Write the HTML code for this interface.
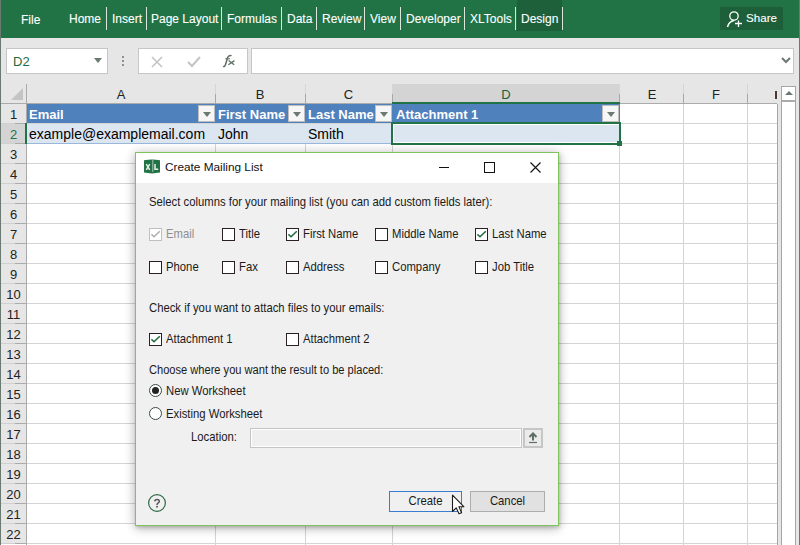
<!DOCTYPE html>
<html><head><meta charset="utf-8">
<style>
*{margin:0;padding:0;box-sizing:border-box}
html,body{width:800px;height:545px;overflow:hidden;background:#fff;font-family:"Liberation Sans",sans-serif}
.a{position:absolute}
#lb{left:0;top:0;width:1px;height:545px;background:#6b7a70;z-index:50}
#rb{left:799px;top:0;width:1px;height:545px;background:#6b7a70;z-index:50}
/* ribbon */
#rib{left:0;top:0;width:800px;height:38px;background:#217346}
.tab{top:12px;color:#fff;font-size:12px;-webkit-text-stroke:0.1px #fff;white-space:nowrap;line-height:14px}
.sep{top:7px;width:1px;height:23px;background:#d8e6dd}
/* formula */
#fb{left:0;top:38px;width:800px;height:46px;background:#e6e6e6}
.box{background:#fff;border:1px solid #c6c6c6}
/* grid */
#hdr{left:0;top:84px;width:778px;height:20px;background:#e6e6e6}
.ch{top:84px;height:20px;text-align:center;font-size:13px;line-height:22px;color:#222}
.vl{width:1px;background:#d4d4d4}
.hl{height:1px;background:#d4d4d4}
.rh{left:1px;width:25px;height:19px;text-align:center;font-size:13px;line-height:21px;color:#222;background:#e6e6e6}
.cell{font-size:14px;white-space:nowrap}
.dd{width:17px;height:17px;background:#f6f6f6;border:1px solid #bdbdbd}
.dd:after{content:"";position:absolute;left:4px;top:6px;border-left:4px solid transparent;border-right:4px solid transparent;border-top:5px solid #6b7a70}
/* dialog */
#dlg{left:135px;top:152px;width:424px;height:374px;border:1px solid #80c35a;background:#f0f0f0;box-shadow:1px 2px 3px rgba(0,0,0,.14),0 0 11px rgba(0,0,0,.15),0 3px 10px rgba(0,0,0,.18);z-index:10}
#ttl{left:0;top:0;width:422px;height:30px;background:#fff}
.t{font-size:11.3px;color:#1a1a1a;white-space:nowrap;line-height:13px;transform:scaleY(1.1);transform-origin:0 78%}
.cb{width:13px;height:13px;border:1px solid #2a2022;background:#fff}
.ck{position:absolute;left:1px;top:1px}
.rd{width:13px;height:13px;border:1px solid #3d4b42;border-radius:50%;background:#fff}
.btn{height:21px;border:1px solid #adadad;background:#e1e1e1;font-size:11.3px;text-align:center;line-height:19px;color:#1a1a1a}
.btn span{display:inline-block;transform:scaleY(1.1)}
</style></head><body>
<div id="lb" class="a"></div>
<div id="rib" class="a">
  <div class="a tab" style="left:21px;top:13px">File</div>
  <div class="a tab" style="left:69px">Home</div>
  <div class="a sep" style="left:106px"></div>
  <div class="a tab" style="left:112px">Insert</div>
  <div class="a sep" style="left:146px"></div>
  <div class="a tab" style="left:151px">Page Layout</div>
  <div class="a sep" style="left:221px"></div>
  <div class="a tab" style="left:227px">Formulas</div>
  <div class="a sep" style="left:281px"></div>
  <div class="a tab" style="left:287px">Data</div>
  <div class="a sep" style="left:316px"></div>
  <div class="a tab" style="left:322px">Review</div>
  <div class="a sep" style="left:364px"></div>
  <div class="a tab" style="left:370px">View</div>
  <div class="a sep" style="left:400px"></div>
  <div class="a tab" style="left:406px">Developer</div>
  <div class="a sep" style="left:464px"></div>
  <div class="a tab" style="left:470px">XLTools</div>
  <div class="a sep" style="left:515px"></div>
  <div class="a" style="left:517px;top:0;width:45px;height:31px;background:#1d6039"></div>
  <div class="a tab" style="left:521px">Design</div>
  <div class="a sep" style="left:562px"></div>
  <div class="a" style="left:720px;top:7px;width:63px;height:23px;background:#1d5f39"></div>
  <svg class="a" style="left:726px;top:10px" width="18" height="19" viewBox="0 0 18 19"><circle cx="8" cy="6" r="4.2" fill="none" stroke="#fff" stroke-width="1.3"/><path d="M1.5 17 Q3 11.5 8 10.6" fill="none" stroke="#fff" stroke-width="1.5"/><path d="M12.5 10.5v6.5M9 13.5h7" stroke="#fff" stroke-width="1.3"/></svg>
  <div class="a tab" style="left:746px;font-size:11.6px;top:11px">Share</div>
</div>
<div id="rb" class="a"></div>
<div id="fb" class="a">
  <div class="a box" style="left:6px;top:10px;width:102px;height:26px"></div>
  <div class="a" style="left:13px;top:16px;font-size:13px;color:#1f6a3c">D2</div>
  <div class="a" style="left:94px;top:20px;border-left:4px solid transparent;border-right:4px solid transparent;border-top:5px solid #6b7a70"></div>
  <div class="a" style="left:122px;top:18px;width:2px;height:2px;background:#8f8f8f"></div>
  <div class="a" style="left:122px;top:22px;width:2px;height:2px;background:#8f8f8f"></div>
  <div class="a" style="left:122px;top:26px;width:2px;height:2px;background:#8f8f8f"></div>
  <div class="a box" style="left:138px;top:10px;width:110px;height:26px"></div>
  <svg class="a" style="left:151px;top:18px" width="12" height="12"><path d="M1 1L11 11M11 1L1 11" stroke="#c4c4c4" stroke-width="1.6"/></svg>
  <svg class="a" style="left:187px;top:18px" width="14" height="12"><path d="M1 6L5 10L13 1" fill="none" stroke="#c4c4c4" stroke-width="2"/></svg>
  <svg class="a" style="left:221px;top:15px" width="16" height="16"><path d="M2 13.4 Q3.8 14.2 4.8 10.8 L6.6 4.6 Q7.6 1.8 10.6 2.6" stroke="#5f6f65" stroke-width="1.5" fill="none"/><path d="M4.3 5.8H9" stroke="#5f6f65" stroke-width="1.1"/><path d="M7.6 7.6L13.2 11.8M13.4 7.6L7.4 11.8" stroke="#5f6f65" stroke-width="1.3"/></svg>
  <div class="a box" style="left:251px;top:10px;width:543px;height:26px"></div>
  <svg class="a" style="left:781px;top:19px" width="10" height="7"><path d="M1 1L5 5L9 1" fill="none" stroke="#6b7a70" stroke-width="2"/></svg>
</div>
<!-- grid -->
<div id="hdr" class="a"></div>
<div class="a" style="left:392px;top:84px;width:227px;height:19px;background:#d4d4d4"></div>
<div class="a ch" style="left:27px;width:188px">A</div>
<div class="a ch" style="left:215px;width:90px">B</div>
<div class="a ch" style="left:305px;width:87px">C</div>
<div class="a ch" style="left:392px;width:228px;color:#1e5f3c">D</div>
<div class="a ch" style="left:620px;width:64px">E</div>
<div class="a ch" style="left:684px;width:64px">F</div>
<div class="a" style="left:775px;top:91px;width:2px;height:8px;background:#4a3a30"></div>
<div class="a" style="left:1px;top:103px;width:777px;height:1px;background:#ababab"></div>
<div id="rows"></div>
<svg class="a" style="left:11px;top:88px" width="13" height="13"><path d="M12 0V12H0Z" fill="#c4c4c4"/></svg>

<div class="a" style="left:26px;top:84px;width:1px;height:461px;background:#ababab"></div>
<div class="a" style="left:25px;top:123px;width:2px;height:21px;background:#217346"></div>
<!-- table -->
<div class="a" style="left:27px;top:104px;width:593px;height:19px;background:#4f81bd"></div>
<div class="a" style="left:27px;top:124px;width:593px;height:19px;background:#dce6f1"></div>
<div class="a cell" style="left:29px;top:107px;font-weight:bold;color:#fff;font-size:13px">Email</div>
<div class="a dd" style="left:198px;top:105px"></div>
<div class="a cell" style="left:218px;top:107px;font-weight:bold;color:#fff;font-size:13px">First Name</div>
<div class="a dd" style="left:288px;top:105px"></div>
<div class="a cell" style="left:308px;top:107px;font-weight:bold;color:#fff;font-size:13px">Last Name</div>
<div class="a dd" style="left:375px;top:105px"></div>
<div class="a cell" style="left:396px;top:107px;font-weight:bold;color:#fff;font-size:13px">Attachment 1</div>
<div class="a dd" style="left:602px;top:105px"></div>
<div class="a cell" style="left:29px;top:126px">example@examplemail.com</div>
<div class="a cell" style="left:218px;top:126px">John</div>
<div class="a cell" style="left:308px;top:126px">Smith</div>
<div class="a" style="left:27px;top:143px;width:593px;height:1px;background:#9bb7dc"></div>
<!-- selection -->
<div class="a" style="left:392px;top:102px;width:228px;height:2px;background:#217346"></div>
<div class="a" style="left:391px;top:122px;width:230px;height:23px;border:2px solid #217346"></div>
<div class="a" style="left:393px;top:124px;width:226px;height:1px;background:#fff"></div>
<div class="a" style="left:393px;top:124px;width:1px;height:19px;background:#fff"></div>
<div class="a" style="left:393px;top:142px;width:224px;height:1px;background:#fff"></div>
<div class="a" style="left:617px;top:141px;width:5px;height:5px;background:#217346"></div>
<!-- scrollbar -->
<div class="a" style="left:777px;top:84px;width:22px;height:461px;background:#e6e6e6"></div>
<div class="a" style="left:777px;top:104px;width:1px;height:441px;background:#a6a6a6"></div>
<div class="a" style="left:781px;top:86px;width:15px;height:459px;border:1px solid #a6a6a6;border-bottom:none;background:#fff"></div>
<div class="a" style="left:781px;top:100px;width:15px;height:2px;background:#ababab"></div>
<div class="a" style="left:785px;top:91px;border-left:4px solid transparent;border-right:4px solid transparent;border-bottom:4px solid #6b7a70"></div>

<!-- dialog -->
<div id="dlg" class="a">
  <div id="ttl" class="a"></div>
  <svg class="a" style="left:8px;top:6px" width="16" height="15" viewBox="0 0 16 15"><path d="M0 1.2 Q8 -0.4 16 1.2 V13.6 Q8 15.2 0 13.6Z" fill="#217346"/><path d="M2.3 5.2L5.7 10.8M5.7 5.2L2.3 10.8" stroke="#e8efe9" stroke-width="1.5"/><path d="M11 5V10.3H14.2" fill="none" stroke="#e8efe9" stroke-width="1.5"/><path d="M8.3 1 l1 1 l-1 1 l1 1 l-1 1 l1 1 l-1 1 l1 1 l-1 1 l1 1 l-1 1 l1 1 l-1 1" fill="none" stroke="#c9dcd0" stroke-width="0.8"/></svg>
  <div class="a" style="left:29px;top:7px;font-size:11.8px;color:#111;white-space:nowrap">Create Mailing List</div>
  <div class="a" style="left:303px;top:14px;width:10px;height:1px;background:#111"></div>
  <div class="a" style="left:348px;top:9px;width:11px;height:11px;border:1px solid #111"></div>
  <svg class="a" style="left:393px;top:8px" width="13" height="13"><path d="M1.5 1.5L11.5 11.5M11.5 1.5L1.5 11.5" stroke="#111" stroke-width="1.1"/></svg>

  <div class="a t" style="left:13px;top:43px">Select columns for your mailing list (you can add custom fields later):</div>

  <div class="a cb" style="left:13px;top:75px;border-color:#c0c0c0"><svg class="ck" width="11" height="11"><path d="M0.4 4.4L3 6.8L8.8 1.2" fill="none" stroke="#adadad" stroke-width="1.5"/></svg></div>
  <div class="a t" style="left:30px;top:75px;color:#8f8f8f">Email</div>
  <div class="a cb" style="left:86px;top:75px"></div>
  <div class="a t" style="left:103px;top:75px">Title</div>
  <div class="a cb" style="left:150px;top:75px"><svg class="ck" width="11" height="11"><path d="M0.4 4.4L3 6.8L8.8 1.2" fill="none" stroke="#1f6b3a" stroke-width="1.5"/></svg></div>
  <div class="a t" style="left:167px;top:75px">First Name</div>
  <div class="a cb" style="left:239px;top:75px"></div>
  <div class="a t" style="left:256px;top:75px">Middle Name</div>
  <div class="a cb" style="left:339px;top:75px"><svg class="ck" width="11" height="11"><path d="M0.4 4.4L3 6.8L8.8 1.2" fill="none" stroke="#1f6b3a" stroke-width="1.5"/></svg></div>
  <div class="a t" style="left:356px;top:75px">Last Name</div>

  <div class="a cb" style="left:13px;top:108px"></div>
  <div class="a t" style="left:30px;top:108px">Phone</div>
  <div class="a cb" style="left:86px;top:108px"></div>
  <div class="a t" style="left:103px;top:108px">Fax</div>
  <div class="a cb" style="left:150px;top:108px"></div>
  <div class="a t" style="left:167px;top:108px">Address</div>
  <div class="a cb" style="left:239px;top:108px"></div>
  <div class="a t" style="left:256px;top:108px">Company</div>
  <div class="a cb" style="left:339px;top:108px"></div>
  <div class="a t" style="left:356px;top:108px">Job Title</div>

  <div class="a t" style="left:13px;top:149px">Check if you want to attach files to your emails:</div>
  <div class="a cb" style="left:13px;top:180px"><svg class="ck" width="11" height="11"><path d="M0.4 4.4L3 6.8L8.8 1.2" fill="none" stroke="#1f6b3a" stroke-width="1.5"/></svg></div>
  <div class="a t" style="left:30px;top:180px">Attachment 1</div>
  <div class="a cb" style="left:150px;top:180px"></div>
  <div class="a t" style="left:167px;top:180px">Attachment 2</div>

  <div class="a t" style="left:13px;top:211px;font-size:11.1px">Choose where you want the result to be placed:</div>
  <div class="a rd" style="left:13px;top:231px"><div class="a" style="left:2px;top:2px;width:7px;height:7px;border-radius:50%;background:#222"></div></div>
  <div class="a t" style="left:30px;top:232px">New Worksheet</div>
  <div class="a rd" style="left:13px;top:254px"></div>
  <div class="a t" style="left:30px;top:255px">Existing Worksheet</div>
  <div class="a t" style="left:55px;top:278px">Location:</div>
  <div class="a" style="left:114px;top:275px;width:272px;height:20px;border:1px solid #c4c4c4;box-shadow:inset 0 0 0 1px #fff;background:#efefef"></div>
  <div class="a" style="left:387px;top:275px;width:20px;height:20px;border:2px solid #c6c6c6;background:#ebebeb"></div>
  <svg class="a" style="left:392px;top:278px" width="12" height="14"><path d="M5 3V9.5M1.5 6L5 2.5L8.5 6" fill="none" stroke="#5f6f65" stroke-width="2"/><path d="M1 11.5H9" stroke="#5f6f65" stroke-width="1.2"/></svg>

  <svg class="a" style="left:11px;top:340px" width="20" height="20"><circle cx="10" cy="10" r="8.4" fill="none" stroke="#2f6a45" stroke-width="1.2"/><path d="M7.7 8.3 Q7.9 6.4 10 6.4 Q12.3 6.4 12.3 8.3 Q12.3 9.5 10.9 10.2 Q10 10.7 10 11.9" fill="none" stroke="#555" stroke-width="1.5"/><circle cx="10" cy="13.7" r="0.95" fill="#555"/></svg>
  <div class="a btn" style="left:253px;top:338px;width:73px;border-color:#3c7cd0;background:#f0f0f0"><span>Create</span></div>
  <div class="a btn" style="left:334px;top:338px;width:75px"><span>Cancel</span></div>
  <svg class="a" style="left:315px;top:341px" width="14" height="21" viewBox="0 0 14 21"><path d="M1.5 1.2V17.5L5.2 13.8L8 19.8L10.6 18.8L7.9 12.7H12.8Z" fill="#fff" stroke="#1a1a1a" stroke-width="1.1" stroke-linejoin="round"/></svg>
</div>
<script>
var r=document.getElementById('rows'),h='';
for(var i=1;i<=22;i++){var y=104+(i-1)*20;
 h+='<div class="a rh" style="top:'+y+'px'+(i==2?';background:#d4d4d4;color:#217346':'')+'">'+i+'</div>';
 h+='<div class="a hl" style="left:27px;top:'+(y+19)+'px;width:750px"></div>';h+='<div class="a hl" style="left:1px;top:'+(y+19)+'px;width:14px;background:#d0d0d0"></div>';h+='<div class="a hl" style="left:15px;top:'+(y+19)+'px;width:11px;background:#ababab"></div>';
}
var xs=[215,305,392,619,683,747];
for(var j=0;j<xs.length;j++){h+='<div class="a vl" style="left:'+xs[j]+'px;top:104px;height:441px"></div>';h+='<div class="a vl" style="left:'+xs[j]+'px;top:84px;height:10px;background:#d6d6d6"></div>';h+='<div class="a vl" style="left:'+xs[j]+'px;top:94px;height:10px;background:#a8a8a8"></div>';}
r.innerHTML=h;
</script>
</body></html>
